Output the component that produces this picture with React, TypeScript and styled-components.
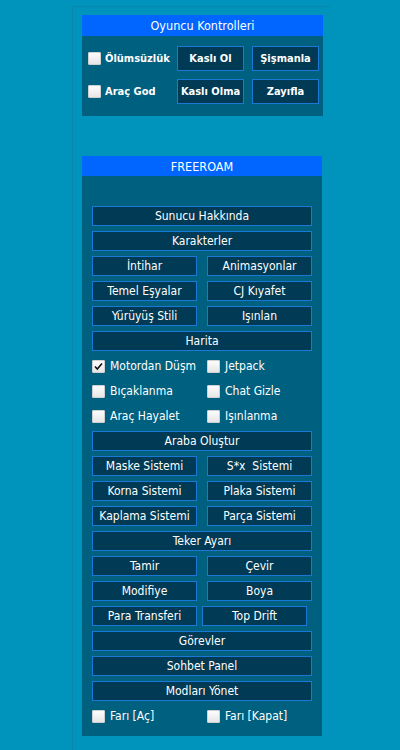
import React from "react";
import styled, { createGlobalStyle } from "styled-components";

const Global = createGlobalStyle`
  html, body { margin: 0; padding: 0; background: #0093bc; }
  body { font-family: "DejaVu Sans Condensed", "DejaVu Sans", Verdana, sans-serif; font-stretch: condensed; color: #fff; }
  * { box-sizing: border-box; }
`;

const Frame = styled.div`
  margin: 6px 0 0 72px;
  width: 258px;
  min-height: 744px;
  border-top: 1px solid #0a86ad;
  border-left: 1px solid #0a86ad;
  padding: 8px 0 0 9px;
  display: flex;
  flex-direction: column;
  gap: 40px;
`;

const Panel = styled.div<{ $w: number }>`
  width: ${(p) => p.$w}px;
  background: #00607f;
`;

const Header = styled.div<{ $h: number }>`
  height: ${(p) => p.$h}px;
  background: #0066ff;
  display: flex;
  align-items: center;
  justify-content: center;
  font-size: 12.5px;
`;

const TopBody = styled.div`
  padding: 10px 0 12px 6px;
  display: flex;
  flex-direction: column;
  gap: 8px;
`;

const TopRow = styled.div`
  display: flex;
  align-items: center;
  gap: 8px;
`;

const TopLabel = styled.label`
  width: 81px;
  display: flex;
  align-items: center;
  gap: 4px;
  font-weight: bold;
  font-size: 11px;
  white-space: nowrap;
`;

const Btn = styled.div<{ $bold?: boolean; $w?: number }>`
  height: ${(p) => (p.$bold ? 25 : 20)}px;
  ${(p) => (p.$w ? `width: ${p.$w}px;` : "")}
  background: #003a55;
  border: 1px solid #1a78d6;
  display: flex;
  align-items: center;
  justify-content: center;
  font-size: ${(p) => (p.$bold ? 11 : 12)}px;
  font-weight: ${(p) => (p.$bold ? "bold" : "normal")};
  white-space: pre;
  overflow: hidden;
`;

const Body = styled.div`
  padding: 30px 10px 10px 10px;
  display: flex;
  flex-direction: column;
  gap: 5px;
`;

const Pair = styled.div`
  display: grid;
  grid-template-columns: 1fr 1fr;
  gap: 10px;
`;

const SplitRow = styled.div`
  display: flex;
  gap: 5px;
`;

const CheckRow = styled.div`
  height: 20px;
  display: grid;
  grid-template-columns: 105px 105px;
  gap: 10px;
  align-items: center;
`;

const CheckLabel = styled.label`
  display: flex;
  align-items: center;
  gap: 5px;
  font-size: 12px;
  white-space: nowrap;
  overflow: hidden;
`;

const Box = styled.span`
  width: 13px;
  height: 13px;
  flex: 0 0 13px;
  border-radius: 2px;
  background: linear-gradient(#ffffff, #e4e4e4);
  box-shadow: inset 0 0 0 1px #d0d0d0;
  display: flex;
  align-items: center;
  justify-content: center;
`;

const Check = ({ on }: { on?: boolean }) => (
  <Box>
    {on && (
      <svg width="11" height="11" viewBox="0 0 11 11">
        <path d="M2 5.5 L4.3 8 L9 2.5" fill="none" stroke="#111" strokeWidth="1.6" />
      </svg>
    )}
  </Box>
);

const CB = ({ label, on }: { label: string; on?: boolean }) => (
  <CheckLabel>
    <Check on={on} />
    {label}
  </CheckLabel>
);

export default function App() {
  return (
    <>
      <Global />
      <Frame>
        <Panel $w={241}>
          <Header $h={21}>Oyuncu Kontrolleri</Header>
          <TopBody>
            <TopRow>
              <TopLabel>
                <Check />
                Ölümsüzlük
              </TopLabel>
              <Btn $bold $w={67}>Kaslı Ol</Btn>
              <Btn $bold $w={67}>Şişmanla</Btn>
            </TopRow>
            <TopRow>
              <TopLabel>
                <Check />
                Araç God
              </TopLabel>
              <Btn $bold $w={67}>Kaslı Olma</Btn>
              <Btn $bold $w={67}>Zayıfla</Btn>
            </TopRow>
          </TopBody>
        </Panel>
        <Panel $w={240}>
          <Header $h={20}>FREEROAM</Header>
          <Body>
            <Btn>Sunucu Hakkında</Btn>
            <Btn>Karakterler</Btn>
            <Pair>
              <Btn>İntihar</Btn>
              <Btn>Animasyonlar</Btn>
            </Pair>
            <Pair>
              <Btn>Temel Eşyalar</Btn>
              <Btn>CJ Kıyafet</Btn>
            </Pair>
            <Pair>
              <Btn>Yürüyüş Stili</Btn>
              <Btn>Işınlan</Btn>
            </Pair>
            <Btn>Harita</Btn>
            <CheckRow>
              <CB label="Motordan Düşm" on />
              <CB label="Jetpack" />
            </CheckRow>
            <CheckRow>
              <CB label="Bıçaklanma" />
              <CB label="Chat Gizle" />
            </CheckRow>
            <CheckRow>
              <CB label="Araç Hayalet" />
              <CB label="Işınlanma" />
            </CheckRow>
            <Btn>Araba Oluştur</Btn>
            <Pair>
              <Btn>Maske Sistemi</Btn>
              <Btn>{"S*x  Sistemi"}</Btn>
            </Pair>
            <Pair>
              <Btn>Korna Sistemi</Btn>
              <Btn>Plaka Sistemi</Btn>
            </Pair>
            <Pair>
              <Btn>Kaplama Sistemi</Btn>
              <Btn>Parça Sistemi</Btn>
            </Pair>
            <Btn>Teker Ayarı</Btn>
            <Pair>
              <Btn>Tamir</Btn>
              <Btn>Çevir</Btn>
            </Pair>
            <Pair>
              <Btn>Modifiye</Btn>
              <Btn>Boya</Btn>
            </Pair>
            <SplitRow>
              <Btn $w={105}>Para Transferi</Btn>
              <Btn $w={105}>Top Drift</Btn>
            </SplitRow>
            <Btn>Görevler</Btn>
            <Btn>Sohbet Panel</Btn>
            <Btn>Modları Yönet</Btn>
            <CheckRow>
              <CB label="Farı [Aç]" />
              <CB label="Farı [Kapat]" />
            </CheckRow>
          </Body>
        </Panel>
      </Frame>
    </>
  );
}
